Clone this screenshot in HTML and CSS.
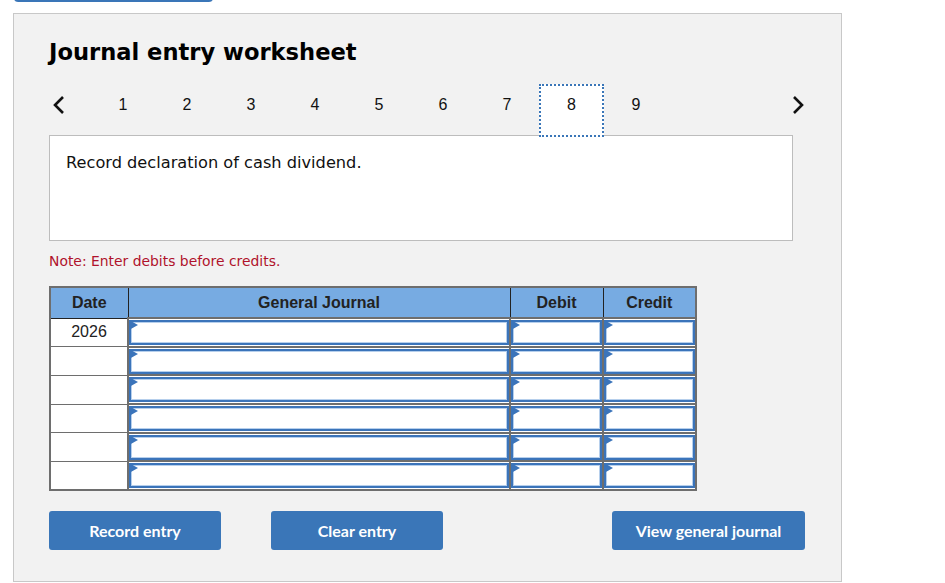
FILE: index.html
```html
<!DOCTYPE html>
<html lang="en">
<head>
    <meta charset="UTF-8">
    <meta name="viewport" content="width=device-width, initial-scale=1.0">
    <title>Journal entry worksheet</title>
    <link rel="stylesheet" href="styles.css">
</head>
<body>
    <div class="top-tab"></div>

    <div class="panel">
        <h1 class="title">Journal entry worksheet</h1>

        <div class="steps">
            <span class="arrow">
                <svg width="14" height="20" viewBox="0 0 14 20"><path d="M11 2 L3 10 L11 18" fill="none" stroke="#111" stroke-width="2.6"/></svg>
            </span>
            <span class="step">1</span>
            <span class="step">2</span>
            <span class="step">3</span>
            <span class="step">4</span>
            <span class="step">5</span>
            <span class="step">6</span>
            <span class="step">7</span>
            <span class="step active">8</span>
            <span class="step">9</span>
            <span class="arrow next">
                <svg width="14" height="20" viewBox="0 0 14 20"><path d="M3 2 L11 10 L3 18" fill="none" stroke="#111" stroke-width="2.6"/></svg>
            </span>
        </div>

        <div class="question">Record declaration of cash dividend.</div>

        <p class="note">Note: Enter debits before credits.</p>

        <table class="journal">
            <thead>
                <tr>
                    <th class="col-date">Date</th>
                    <th class="col-desc">General Journal</th>
                    <th class="col-num">Debit</th>
                    <th class="col-num">Credit</th>
                </tr>
            </thead>
            <tbody id="rows"></tbody>
        </table>

        <div class="actions">
            <button class="btn">Record entry</button>
            <button class="btn">Clear entry</button>
            <button class="btn wide">View general journal</button>
        </div>
    </div>

    <script>
        const rows = ['2026', '', '', '', '', ''];
        const body = document.getElementById('rows');

        rows.forEach(date => {
            const tr = document.createElement('tr');
            tr.innerHTML =
                '<td class="date">' + date + '</td>' +
                '<td class="entry"><div class="field"></div></td>' +
                '<td class="entry"><div class="field"></div></td>' +
                '<td class="entry"><div class="field"></div></td>';
            body.appendChild(tr);
        });
    </script>
</body>
</html>
```

FILE: styles.css
```css
* {
    margin: 0;
    padding: 0;
    box-sizing: border-box;
}

body {
    background: #fff;
    font-family: "Liberation Sans", Arial, sans-serif;
    color: #222;
}

.top-tab {
    position: absolute;
    top: -8px;
    left: 14px;
    width: 199px;
    height: 10px;
    background: #3a76b8;
    border-radius: 4px;
}

.panel {
    margin: 13px 0 0 13px;
    width: 829px;
    height: 569px;
    background: #f2f2f2;
    border: 1px solid #c8c8c8;
    padding: 25px 0 0 35px;
}

.title {
    font-family: "DejaVu Sans", Verdana, sans-serif;
    font-size: 22.6px;
    font-weight: bold;
    color: #000;
    line-height: 26px;
}

.steps {
    display: flex;
    align-items: center;
    height: 53px;
    margin-top: 19px;
}

.arrow {
    width: 42px;
    display: flex;
    align-items: center;
    padding-left: 3px;
    padding-bottom: 12px;
}

.arrow.next {
    margin-left: 120px;
}

.step {
    width: 64px;
    height: 53px;
    display: flex;
    align-items: center;
    justify-content: center;
    padding-bottom: 12px;
    font-size: 16px;
    color: #111;
}

.step.active {
    width: 65px;
    background: #fff;
    border: 2px dotted #3a76b8;
}

.question {
    width: 744px;
    height: 106px;
    margin-top: -2px;
    background: #fff;
    border: 1px solid #bdbdbd;
    padding: 17px 16px;
    font-family: "DejaVu Sans", Verdana, sans-serif;
    font-size: 16.2px;
    color: #111;
}

.note {
    margin-top: 12px;
    font-family: "DejaVu Sans", Verdana, sans-serif;
    font-size: 13.9px;
    color: #b0122c;
    line-height: 17px;
}

.journal {
    margin-top: 16px;
    border-collapse: collapse;
    width: 648px;
    border: 2px solid #6e6e6e;
}

.journal th {
    background: #77abe2;
    height: 31px;
    font-size: 16px;
    font-weight: bold;
    color: #222;
    border: 1px solid #222;
    border-top: none;
}

.col-date { width: 78px; }
.col-desc { width: 382px; }
.col-num { width: 93px; }

.journal td {
    height: 28.7px;
    background: #fff;
    border: 2px solid #6e6e6e;
}

.journal td.date {
    text-align: center;
    font-size: 16px;
    color: #222;
    border-width: 1px 2px 1px 1px;
}

.journal td.entry {
    padding: 0;
}

.field {
    position: relative;
    height: 25px;
    border: 2px solid #3b74ba;
    box-shadow: inset 0 0 0 1px #b6cfec;
    background: #fff;
}

.field::before {
    content: "";
    position: absolute;
    top: -2px;
    left: -2px;
    border-top: 5px solid transparent;
    border-bottom: 5px solid transparent;
    border-left: 9px solid #3b74ba;
}

.actions {
    display: flex;
    margin-top: 20px;
}

.btn {
    width: 172px;
    height: 39px;
    background: #3a76b8;
    color: #fff;
    border: none;
    border-radius: 3px;
    font-family: Lato, "Liberation Sans", sans-serif;
    font-size: 16px;
    font-weight: bold;
    margin-right: 50px;
    cursor: pointer;
}

.btn.wide {
    width: 193px;
    margin-left: 119px;
    margin-right: 0;
}
```
